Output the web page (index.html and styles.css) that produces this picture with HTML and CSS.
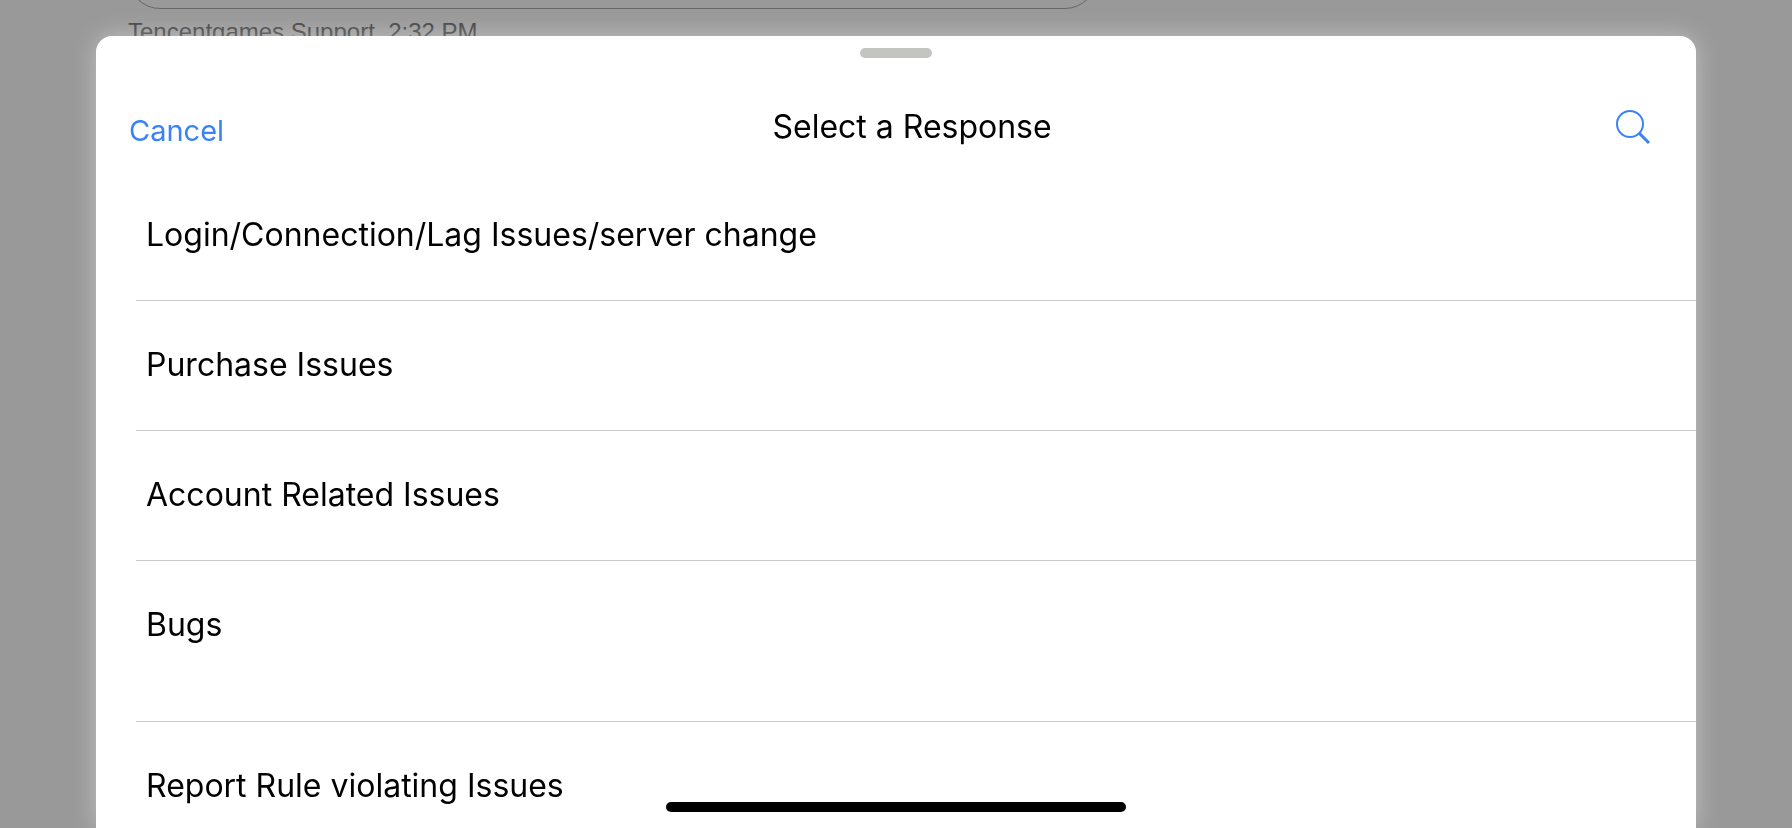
FILE: index.html
```
<!DOCTYPE html>
<html lang="en">
<head>
  <meta charset="UTF-8">
  <meta name="viewport" content="width=device-width, initial-scale=1.0">
  <title>Select a Response</title>
  <link rel="stylesheet" href="styles.css">
</head>
<body>
  <div class="chat">
    <div class="chat-bubble"></div>
    <p class="chat-meta">Tencentgames Support&nbsp; 2:32 PM</p>
  </div>

  <main class="sheet">
    <div class="sheet-handle"></div>
    <header class="sheet-header">
      <button class="cancel" type="button">Cancel</button>
      <h1 class="sheet-title">Select a Response</h1>
      <button class="search" type="button" aria-label="Search">
        <svg width="36" height="36" viewBox="0 0 36 36" fill="none" stroke="currentColor">
          <circle cx="15" cy="15" r="13" stroke-width="2"/>
          <path d="M24 24L34 34" stroke-width="3"/>
        </svg>
      </button>
    </header>
    <ul class="response-list">
      <li><button type="button">Login/Connection/Lag Issues/server change</button></li>
      <li><button type="button">Purchase Issues</button></li>
      <li><button type="button">Account Related Issues</button></li>
      <li class="tall"><button type="button">Bugs</button></li>
      <li><button type="button">Report Rule violating Issues</button></li>
    </ul>
  </main>
  <div class="home-indicator"></div>
</body>
</html>
```

FILE: styles.css
```
*{
  box-sizing: border-box;
}

body{
  margin: 0;
  height: 100vh;
  overflow: hidden;
  background: #999;
  font-family: Inter, "Liberation Sans", sans-serif;
  color: #000;
}

button{
  appearance: none;
  border: none;
  padding: 0;
  background: none;
  font: inherit;
  color: inherit;
  cursor: pointer;
}

/* conversation behind the sheet */
.chat{
  padding: 0 126px 0 128px;
}

.chat-bubble{
  width: 63%;
  height: 64px;
  margin-top: -55px;
  border: 1px solid #666;
  border-radius: 32px;
}

.chat-meta{
  margin: 8px 0 0;
  font-family: "Liberation Sans", sans-serif;
  font-size: 24px;
  line-height: 30px;
  color: #444;
}

/* sheet */
.sheet{
  position: fixed;
  top: 36px;
  left: 96px;
  right: 96px;
  bottom: 0;
  overflow: hidden;
  background: #fff;
  border-radius: 16px 16px 0 0;
  box-shadow: 0 0 24px rgba(255, 255, 255, 0.4);
}

.sheet-handle{
  width: 72px;
  height: 10px;
  margin: 12px auto 0;
  border-radius: 5px;
  background: #c3c5c1;
}

.sheet-header{
  display: flex;
  align-items: flex-start;
  height: 113px;
  padding: 26px 0 0 33px;
}

.cancel{
  margin-top: 29px;
  font-size: 29px;
  line-height: 36px;
  color: #3a83f7;
}

.sheet-title{
  flex: 1;
  margin: 23px 0 0;
  font-size: 32px;
  font-weight: 400;
  line-height: 40px;
  text-align: center;
}

.search{
  width: 96px;
  height: 36px;
  margin-top: 25px;
  padding-left: 15px;
  text-align: left;
  color: #3a83f7;
}

.search svg{
  display: block;
}

/* responses */
.response-list{
  margin: 0 0 0 40px;
  padding: 0;
  list-style: none;
}

.response-list li{
  border-bottom: 1px solid #c8c8ca;
}

.response-list button{
  display: block;
  width: 100%;
  padding: 44px 0 45px 10px;
  font-size: 32px;
  line-height: 40px;
  text-align: left;
}

.response-list .tall button{
  padding-bottom: 76px;
}

.home-indicator{
  position: fixed;
  left: 50%;
  bottom: 16px;
  width: 460px;
  height: 10px;
  margin-left: -230px;
  border-radius: 5px;
  background: #000;
}
```
